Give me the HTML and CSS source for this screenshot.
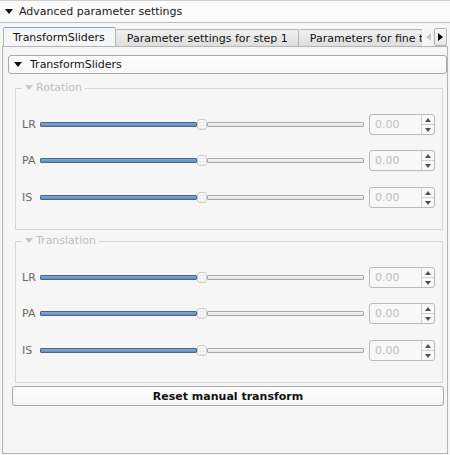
FILE: index.html
```html
<!DOCTYPE html>
<html>
<head>
<meta charset="utf-8">
<link rel="stylesheet" href="styles.css">
</head>
<body>
<div class="header">
  <svg class="tri" width="8" height="6" viewBox="0 0 8 6"><path d="M0 0H8L4 5Z" fill="#111"/></svg>
  <span>Advanced parameter settings</span>
</div>
<div class="tabbar">
  <div class="tab active">TransformSliders</div>
  <div class="tab">Parameter settings for step 1</div>
  <div class="tab last">Parameters for fine tuning</div>
  <div class="scrollbtns">
    <div class="sbtn left"><svg width="5" height="8" viewBox="0 0 5 8"><path d="M5 0V8L0 4Z" fill="#c8c8c8"/></svg></div>
    <div class="sbtn right"><svg width="5" height="8" viewBox="0 0 5 8"><path d="M0 0V8L5 4Z" fill="#000"/></svg></div>
  </div>
</div>
<div class="pane">
  <div class="collapse">
    <svg class="tri" width="8" height="6" viewBox="0 0 8 6"><path d="M0 0H8L4 5Z" fill="#111"/></svg>
    <span>TransformSliders</span>
  </div>

  <fieldset class="group">
    <legend><svg width="8" height="6" viewBox="0 0 8 6"><path d="M0 0H8L4 5Z" fill="#c8c8c8"/></svg><span>Rotation</span></legend>
    <div class="row"><span class="lbl">LR</span><div class="slider"><div class="fill"></div><div class="handle"></div><div class="rest"></div></div><div class="spin"><span class="val">0.00</span><div class="arrows"><div class="up"></div><div class="down"></div></div></div></div>
    <div class="row"><span class="lbl">PA</span><div class="slider"><div class="fill"></div><div class="handle"></div><div class="rest"></div></div><div class="spin"><span class="val">0.00</span><div class="arrows"><div class="up"></div><div class="down"></div></div></div></div>
    <div class="row"><span class="lbl">IS</span><div class="slider"><div class="fill"></div><div class="handle"></div><div class="rest"></div></div><div class="spin"><span class="val">0.00</span><div class="arrows"><div class="up"></div><div class="down"></div></div></div></div>
  </fieldset>

  <fieldset class="group second">
    <legend><svg width="8" height="6" viewBox="0 0 8 6"><path d="M0 0H8L4 5Z" fill="#c8c8c8"/></svg><span>Translation</span></legend>
    <div class="row"><span class="lbl">LR</span><div class="slider"><div class="fill"></div><div class="handle"></div><div class="rest"></div></div><div class="spin"><span class="val">0.00</span><div class="arrows"><div class="up"></div><div class="down"></div></div></div></div>
    <div class="row"><span class="lbl">PA</span><div class="slider"><div class="fill"></div><div class="handle"></div><div class="rest"></div></div><div class="spin"><span class="val">0.00</span><div class="arrows"><div class="up"></div><div class="down"></div></div></div></div>
    <div class="row"><span class="lbl">IS</span><div class="slider"><div class="fill"></div><div class="handle"></div><div class="rest"></div></div><div class="spin"><span class="val">0.00</span><div class="arrows"><div class="up"></div><div class="down"></div></div></div></div>
  </fieldset>

  <button class="reset">Reset manual transform</button>
</div>
</body>
</html>
```

FILE: styles.css
```css
* { box-sizing: border-box; }
html, body { margin: 0; padding: 0; }
body {
  width: 450px;
  height: 455px;
  overflow: hidden;
  background: #f7f7f7;
  font-family: "DejaVu Sans", "Liberation Sans", sans-serif;
  font-size: 11px;
  color: #1a1a1a;
}

.header {
  height: 23px;
  display: flex;
  align-items: center;
  padding-left: 5px;
  background: #fbfbfb;
  border-top: 1px solid #cfcfcf;
  border-bottom: 1px solid #bdbdbd;
  font-size: 11px;
}
.header .tri { margin-right: 6px; margin-top: 1px; }

.tabbar {
  height: 19px;
  margin-top: 4px;
  margin-left: 3px;
  margin-right: 3px;
  display: flex;
  align-items: flex-end;
  position: relative;
  overflow: hidden;
}
.tab {
  height: 17px;
  padding: 0 10px 0 11px;
  display: flex;
  align-items: center;
  white-space: nowrap;
  border: 1px solid #b4b4b4;
  border-bottom: none;
  border-left: none;
  border-radius: 2px 2px 0 0;
  background: linear-gradient(#f0f0f0, #dedede);
  color: #111;
  flex: none;
}
.tab.active {
  height: 19px;
  padding: 0 10px 0 9px;
  border-left: 1px solid #b4b4b4;
  border-top: 1px solid #7fa3c9;
  background: #f6f6f6;
}
.tab.last { padding-left: 11px; }

.scrollbtns {
  position: absolute;
  right: 0;
  top: 1px;
  height: 18px;
  display: flex;
  background: #f7f7f7;
}
.sbtn {
  width: 12px;
  height: 18px;
  display: flex;
  align-items: center;
  justify-content: center;
}
.sbtn.left { background: linear-gradient(90deg, rgba(247,247,247,0.6), #f4f4f4); }
.sbtn.right {
  width: 13px;
  border: 1px solid #b4b4b4;
  border-radius: 2px;
  background: linear-gradient(#fafafa, #e6e6e6);
}

.pane {
  margin-left: 2px;
  width: 446px;
  height: 408px;
  border: 1px solid #b4b4b4;
  background: #f6f6f6;
  display: flex;
  flex-direction: column;
}

.collapse {
  margin: 8px 0 0 5px;
  height: 19px;
  border: 1px solid #a9a9a9;
  border-radius: 3px;
  background: linear-gradient(#ffffff, #f7f7f7);
  display: flex;
  align-items: center;
  padding-left: 5px;
  color: #111;
  font-size: 11px;
}
.collapse .tri { margin-right: 8px; margin-top: 1px; }

.group {
  margin: 7px 4px 0 12px;
  padding: 19px 7px 21px 6px;
  border: 1px solid #d6d6d6;
  min-width: 0;
}
.group.second { margin-top: 4px; }
.group legend {
  padding: 0 3px;
  height: 14px;
  line-height: 14px;
  color: #c0c0c0;
  display: flex;
  align-items: center;
  font-size: 11px;
}
.group legend svg { margin-right: 3px; }

.row {
  height: 21px;
  display: flex;
  align-items: center;
}
.row + .row { margin-top: 15px; }
.row:nth-of-type(3) { margin-top: 16px; }
.lbl {
  width: 18px;
  color: #6e6862;
  flex: none;
  font-size: 11px;
}
.slider {
  flex: 1;
  height: 12px;
  display: flex;
  align-items: center;
  margin-right: 5px;
}
.fill {
  width: 157px;
  height: 5px;
  border: 1px solid #46668f;
  border-radius: 1px;
  background: linear-gradient(#86a9d3, #5f8abf);
  flex: none;
}
.handle {
  width: 10px;
  height: 11px;
  border: 1px solid #cdcdcd;
  border-radius: 3px;
  background: radial-gradient(circle, #d8d8d8 0.6px, transparent 1px) 1px 1px / 3px 3px, #f6f6f6;
  flex: none;
}
.rest {
  flex: 1;
  height: 5px;
  border: 1px solid #a9a9a9;
  border-radius: 1px;
  background: linear-gradient(#f4f4f4, #e4e4e4);
}

.spin {
  width: 66px;
  height: 21px;
  border: 1px solid #b9b9b9;
  border-radius: 3px;
  background: #f8f8f8;
  display: flex;
  flex: none;
}
.val {
  flex: 1;
  padding-left: 5px;
  line-height: 19px;
  color: #bdbdbd;
  font-size: 11px;
}
.arrows {
  width: 13px;
  border-left: 1px solid #d0d0d0;
  display: flex;
  flex-direction: column;
}
.up, .down {
  flex: 1;
  position: relative;
}
.down { border-top: 1px solid #d0d0d0; }
.up::after, .down::after {
  content: "";
  position: absolute;
  left: 3px;
  width: 0;
  height: 0;
  border-left: 3.5px solid transparent;
  border-right: 3.5px solid transparent;
}
.up::after { top: 3px; border-bottom: 4px solid #505050; }
.down::after { top: 3px; border-top: 4px solid #505050; }

.reset {
  margin: 3px 3px 0 9px;
  height: 20px;
  border: 1px solid #a9a9a9;
  border-radius: 3px;
  background: linear-gradient(#ffffff, #f4f4f4);
  font-family: "DejaVu Sans", "Liberation Sans", sans-serif;
  font-size: 11px;
  font-weight: bold;
  color: #111;
  padding: 0;
}
```
